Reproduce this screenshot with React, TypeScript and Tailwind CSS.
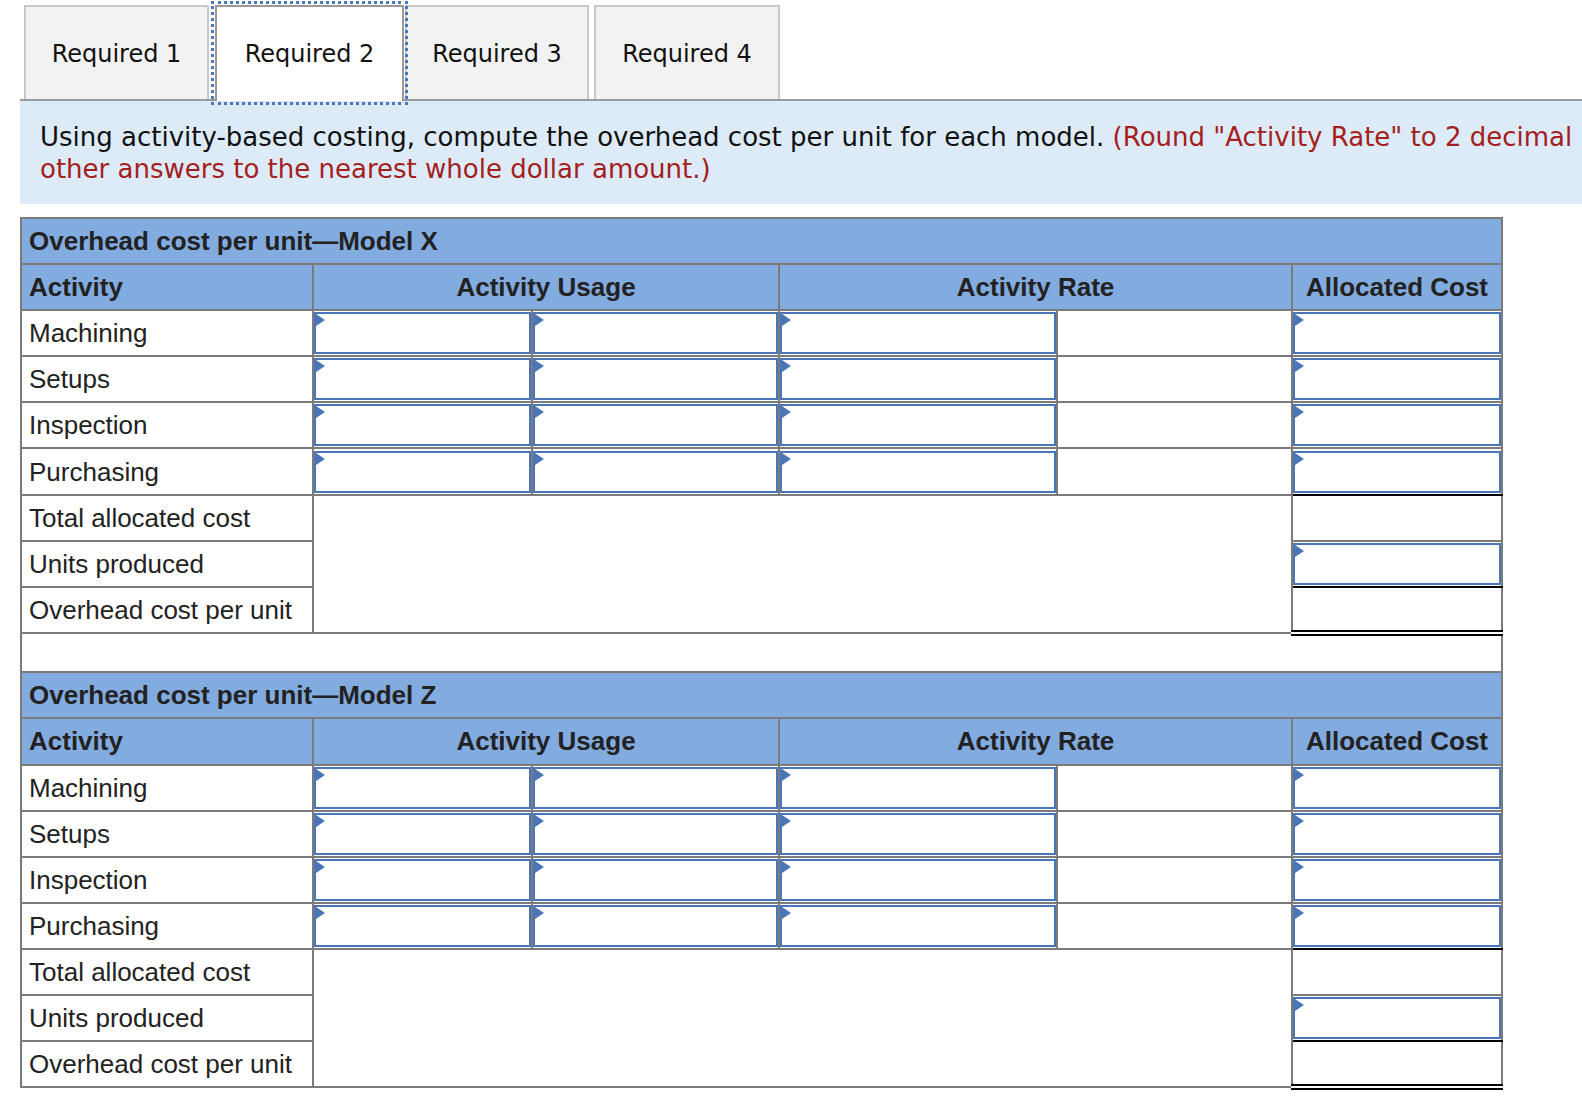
// Activity-based costing worksheet: tabs, instructions and two answer tables
const cell = 'border-2 border-[#7b7b7b]';
const head = 'bg-[#82abdf] font-bold';
const row = 'h-[46.1px]';

const tabs = [
  { label: 'Required 1', cls: 'ml-[4px] w-[185px]' },
  { label: 'Required 2', cls: 'ml-[6px] w-[189px]', active: true },
  { label: 'Required 3', cls: 'ml-[1px] w-[184px]' },
  { label: 'Required 4', cls: 'ml-[5px] w-[186px]' },
];

const activities = ['Machining', 'Setups', 'Inspection', 'Purchasing'];

function Input() {
  return (
    <div className="relative h-[42px] border-2 border-[#4a76b8] bg-white">
      <svg className="absolute left-0 top-0" width="9" height="12" viewBox="0 0 9 12">
        <polygon points="0,0 9,6 0,12" fill="#4a76b8" />
      </svg>
    </div>
  );
}

function ModelTable({ model }: { model: string }) {
  return (
    <>
      <tr className={row}>
        <td colSpan={6} className={`${cell} ${head} pl-[7px]`}>
          Overhead cost per unit—Model {model}
        </td>
      </tr>
      <tr className={row}>
        <td className={`${cell} ${head} pl-[7px]`}>Activity</td>
        <td colSpan={2} className={`${cell} ${head} text-center`}>Activity Usage</td>
        <td colSpan={2} className={`${cell} ${head} text-center`}>Activity Rate</td>
        <td className={`${cell} ${head} text-center`}>Allocated Cost</td>
      </tr>
      {activities.map((name, i) => (
        <tr key={name} className={row}>
          <td className={`${cell} pl-[7px]`}>{name}</td>
          <td className={`${cell} p-0`}><Input /></td>
          <td className={`${cell} p-0`}><Input /></td>
          <td className={`${cell} p-0`}><Input /></td>
          <td className={cell} />
          <td className={`${cell} p-0 ${i === activities.length - 1 ? 'border-b-black' : ''}`}><Input /></td>
        </tr>
      ))}
      <tr className={row}>
        <td className={`${cell} pl-[7px]`}>Total allocated cost</td>
        <td colSpan={4} rowSpan={3} className={cell} />
        <td className={`${cell} border-t-black`} />
      </tr>
      <tr className={row}>
        <td className={`${cell} pl-[7px]`}>Units produced</td>
        <td className={`${cell} p-0 border-b-black`}><Input /></td>
      </tr>
      <tr className={row}>
        <td className={`${cell} pl-[7px]`}>Overhead cost per unit</td>
        <td className={`${cell} border-t-black border-b-[6px] border-b-black [border-bottom-style:double]`} />
      </tr>
    </>
  );
}

export default function App() {
  return (
    <div className="w-full overflow-hidden bg-white pb-4">
      <div className="w-[1900px]">
        {/* tab strip */}
        <div className="ml-[20px] flex h-[101px] items-end border-b-2 border-[#9a9a9a] font-['DejaVu_Sans',sans-serif] text-[24px] text-[#111]">
          {tabs.map((t) =>
            t.active ? (
              <div
                key={t.label}
                className={`${t.cls} relative z-10 -mb-[2px] flex h-[96px] items-center justify-center border-2 border-b-0 border-[#999] bg-white outline-[3px] outline-dotted outline-[#4b77c1] outline-offset-[1px]`}
              >
                {t.label}
              </div>
            ) : (
              <div
                key={t.label}
                className={`${t.cls} flex h-[94px] items-center justify-center border-2 border-b-0 border-[#c8c8c8] bg-[#f2f2f2] pt-[2px]`}
              >
                {t.label}
              </div>
            )
          )}
        </div>

        {/* instructions */}
        <div className="ml-[20px] h-[103px] bg-[#ddebf8] pl-[20px] pt-[20px] font-['DejaVu_Sans',sans-serif] text-[26px] leading-[32px] whitespace-nowrap text-[#111]">
          Using activity-based costing, compute the overhead cost per unit for each model.{' '}
          <span className="text-[#a3201d]">
            (Round "Activity Rate" to 2 decimal places and round all
            <br />
            other answers to the nearest whole dollar amount.)
          </span>
        </div>

        {/* answer tables */}
        <table className="ml-[20px] mt-[13px] w-[1481px] table-fixed border-collapse font-['Liberation_Sans',Arial,sans-serif] text-[26px] leading-none text-[#222]">
          <colgroup>
            <col className="w-[292px]" />
            <col className="w-[219px]" />
            <col className="w-[247px]" />
            <col className="w-[278px]" />
            <col className="w-[235px]" />
            <col className="w-[210px]" />
          </colgroup>
          <tbody>
            <ModelTable model="X" />
            <tr className="h-[39.5px]">
              <td colSpan={6} className={cell} />
            </tr>
            <ModelTable model="Z" />
          </tbody>
        </table>
      </div>
    </div>
  );
}
